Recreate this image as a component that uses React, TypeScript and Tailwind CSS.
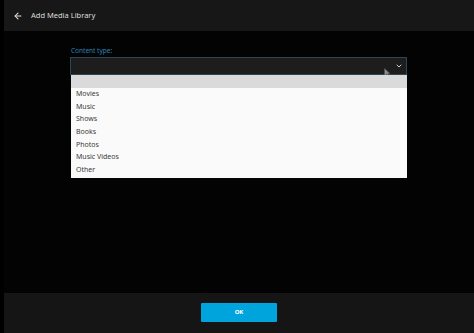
import React from "react";
import { ArrowLeft, ChevronDown } from "lucide-react";

const options = ["Movies", "Music", "Shows", "Books", "Photos", "Music Videos", "Other"];

const App = () => {
  return (
    <div
      className="flex w-[474px] h-[333px] bg-[#030303] overflow-hidden"
      style={{ fontFamily: '"Noto Sans", "Open Sans", sans-serif' }}
    >
      <div className="w-[4px] shrink-0 bg-black" />
      <div className="flex flex-col flex-1">
        {/* header */}
        <div className="flex items-center h-[31px] bg-[#171717] pl-[9px] gap-[8px]">
          <ArrowLeft className="w-[10px] h-[10px] text-[#e6e6e6]" strokeWidth={2.5} />
          <span className="text-[7.5px] text-[#dedede]">Add Media Library</span>
        </div>

        {/* body */}
        <div className="flex-1 pl-[66px] pt-[15px]">
          <div className="w-[337px]">
            <div className="text-[6.5px] leading-[9px] text-[#2c86b5] pl-[1px]">Content type:</div>
            <div className="relative mt-[2px]">
              <div className="flex items-center justify-end h-[18px] bg-[#1d1d1d] border border-[#2b4656] pr-[3px]">
                <ChevronDown className="w-[8px] h-[8px] text-[#cfcfcf]" strokeWidth={3} />
              </div>
              {/* mouse pointer */}
              <svg
                className="absolute left-[314px] top-[11px]"
                width="7"
                height="10"
                viewBox="0 0 7 10"
              >
                <path d="M0.5 0.5 L0.5 8 L2.4 6.3 L3.8 9.3 L5 8.8 L3.6 5.8 L6.2 5.8 Z" fill="#8a8a8a" stroke="#555" strokeWidth="0.5" />
              </svg>
              {/* native dropdown */}
              <div className="absolute left-[1px] right-0 top-[18px] bg-[#fafafa] z-10 pb-[1px]">
                <div className="h-[13px] bg-[#dadada]" />
                {options.map((o) => (
                  <div key={o} className="h-[12.67px] flex items-center pl-[5px] text-[7px] text-[#3a3a3a]">
                    {o}
                  </div>
                ))}
              </div>
            </div>
          </div>
        </div>

        {/* footer */}
        <div className="flex justify-center items-start h-[40px] bg-[#151515] pt-[10px]">
          <button className="w-[76px] h-[19px] bg-[#00a4dc] rounded-[1px] text-[6px] font-bold text-white">
            OK
          </button>
        </div>
      </div>
    </div>
  );
};

export default App;
